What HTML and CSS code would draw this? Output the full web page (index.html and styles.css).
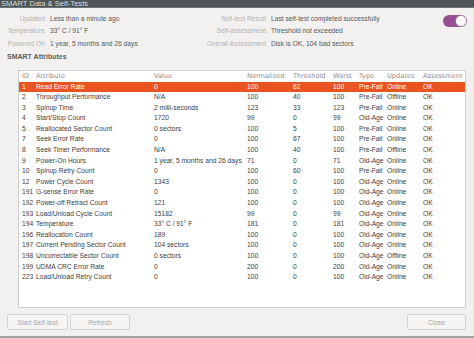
FILE: index.html
```html
<!DOCTYPE html>
<html lang="en">
<head>
    <meta charset="UTF-8">
    <title>SMART Data &amp; Self-Tests</title>
    <link rel="stylesheet" href="styles.css">
</head>
<body>
    <div class="titlebar"><span>SMART Data &amp; Self-Tests</span></div>

    <div class="summary">
        <span class="label">Updated</span>
        <span class="val">Less than a minute ago</span>
        <span class="label">Self-test Result</span>
        <span class="val">Last self-test completed successfully</span>
        <div class="switch"><span class="knob"></span></div>

        <span class="label">Temperature</span>
        <span class="val">33° C / 91° F</span>
        <span class="label">Self-assessment</span>
        <span class="val">Threshold not exceeded</span>
        <span></span>

        <span class="label">Powered On</span>
        <span class="val">1 year, 5 months and 26 days</span>
        <span class="label">Overall Assessment</span>
        <span class="val">Disk is OK, 104 bad sectors</span>
        <span></span>
    </div>

    <h2 class="section">SMART Attributes</h2>

    <div class="attrs">
        <table>
            <colgroup>
                <col class="c-id"><col class="c-name"><col class="c-value"><col class="c-norm">
                <col class="c-thr"><col class="c-worst"><col class="c-type"><col class="c-upd"><col class="c-ass">
            </colgroup>
            <thead>
                <tr>
                    <th>ID</th><th>Attribute</th><th>Value</th><th>Normalized</th><th>Threshold</th>
                    <th>Worst</th><th>Type</th><th>Updates</th><th>Assessment</th>
                </tr>
            </thead>
            <tbody>
                <tr class="selected"><td>1</td><td>Read Error Rate</td><td>0</td><td>100</td><td>62</td><td>100</td><td>Pre-Fail</td><td>Online</td><td>OK</td></tr>
                <tr><td>2</td><td>Throughput Performance</td><td>N/A</td><td>100</td><td>40</td><td>100</td><td>Pre-Fail</td><td>Offline</td><td>OK</td></tr>
                <tr><td>3</td><td>Spinup Time</td><td>2 milli-seconds</td><td>123</td><td>33</td><td>123</td><td>Pre-Fail</td><td>Online</td><td>OK</td></tr>
                <tr><td>4</td><td>Start/Stop Count</td><td>1720</td><td>99</td><td>0</td><td>99</td><td>Old-Age</td><td>Online</td><td>OK</td></tr>
                <tr><td>5</td><td>Reallocated Sector Count</td><td>0 sectors</td><td>100</td><td>5</td><td>100</td><td>Pre-Fail</td><td>Online</td><td>OK</td></tr>
                <tr><td>7</td><td>Seek Error Rate</td><td>0</td><td>100</td><td>67</td><td>100</td><td>Pre-Fail</td><td>Online</td><td>OK</td></tr>
                <tr><td>8</td><td>Seek Timer Performance</td><td>N/A</td><td>100</td><td>40</td><td>100</td><td>Pre-Fail</td><td>Offline</td><td>OK</td></tr>
                <tr><td>9</td><td>Power-On Hours</td><td>1 year, 5 months and 26 days</td><td>71</td><td>0</td><td>71</td><td>Old-Age</td><td>Online</td><td>OK</td></tr>
                <tr><td>10</td><td>Spinup Retry Count</td><td>0</td><td>100</td><td>60</td><td>100</td><td>Pre-Fail</td><td>Online</td><td>OK</td></tr>
                <tr><td>12</td><td>Power Cycle Count</td><td>1343</td><td>100</td><td>0</td><td>100</td><td>Old-Age</td><td>Online</td><td>OK</td></tr>
                <tr><td>191</td><td>G-sense Error Rate</td><td>0</td><td>100</td><td>0</td><td>100</td><td>Old-Age</td><td>Online</td><td>OK</td></tr>
                <tr><td>192</td><td>Power-off Retract Count</td><td>121</td><td>100</td><td>0</td><td>100</td><td>Old-Age</td><td>Online</td><td>OK</td></tr>
                <tr><td>193</td><td>Load/Unload Cycle Count</td><td>15182</td><td>99</td><td>0</td><td>99</td><td>Old-Age</td><td>Online</td><td>OK</td></tr>
                <tr><td>194</td><td>Temperature</td><td>33° C / 91° F</td><td>181</td><td>0</td><td>181</td><td>Old-Age</td><td>Online</td><td>OK</td></tr>
                <tr><td>196</td><td>Reallocation Count</td><td>189</td><td>100</td><td>0</td><td>100</td><td>Old-Age</td><td>Online</td><td>OK</td></tr>
                <tr><td>197</td><td>Current Pending Sector Count</td><td>104 sectors</td><td>100</td><td>0</td><td>100</td><td>Old-Age</td><td>Online</td><td>OK</td></tr>
                <tr><td>198</td><td>Uncorrectable Sector Count</td><td>0 sectors</td><td>100</td><td>0</td><td>100</td><td>Old-Age</td><td>Offline</td><td>OK</td></tr>
                <tr><td>199</td><td>UDMA CRC Error Rate</td><td>0</td><td>200</td><td>0</td><td>200</td><td>Old-Age</td><td>Online</td><td>OK</td></tr>
                <tr><td>223</td><td>Load/Unload Retry Count</td><td>0</td><td>100</td><td>0</td><td>100</td><td>Old-Age</td><td>Online</td><td>OK</td></tr>
            </tbody>
        </table>
    </div>

    <div class="actions">
        <button class="btn btn-start">Start Self-test</button>
        <button class="btn btn-refresh">Refresh</button>
        <span class="spacer"></span>
        <button class="btn btn-close">Close</button>
    </div>

    <div class="bottom-edge"></div>
</body>
</html>
```

FILE: styles.css
```css
body {
    margin: 0;
    height: 338px;
    overflow: hidden;
    background: #f2f1f0;
    font-family: "Liberation Sans", Arial, sans-serif;
    font-size: 6.7px;
    color: #404040;
}

.titlebar {
    height: 7px;
    background: #4f5456;
    border-bottom: 1px solid #6d7274;
    overflow: hidden;
}

.titlebar span {
    display: block;
    padding-left: 1px;
    font-size: 7.6px;
    line-height: 7px;
    color: #dedede;
    white-space: nowrap;
}

.summary {
    display: grid;
    grid-template-columns: 45px 145px 66px 1fr 24px;
    grid-auto-rows: 12.5px;
    column-gap: 5px;
    align-items: center;
    padding: 4px 7px 0 0;
    white-space: nowrap;
}

.summary .label {
    text-align: right;
    color: #b2b2b2;
}

.summary .val {
    color: #585858;
}

.switch {
    align-self: start;
    margin-top: 3px;
    height: 12px;
    border-radius: 6px;
    background: #974f93;
    display: flex;
    justify-content: flex-end;
    align-items: center;
    padding: 0 1px;
}

.knob {
    width: 10px;
    height: 10px;
    border-radius: 50%;
    background: #fafafa;
    box-shadow: 0 0 0 0.5px #b8b8b8;
}

.section {
    margin: 2px 0 0 7px;
    font-size: 7px;
    line-height: 10px;
    font-weight: bold;
    color: #5e5e5e;
}

.attrs {
    box-sizing: border-box;
    height: 238px;
    margin: 8.5px 8px 0 18px;
    border: 1px solid #cfcfcf;
    background: #fff;
}

table {
    width: 100%;
    table-layout: fixed;
    border-collapse: collapse;
}

.c-id { width: 17px; }
.c-name { width: 118px; }
.c-value { width: 93px; }
.c-norm { width: 46px; }
.c-thr { width: 40px; }
.c-worst { width: 26px; }
.c-type { width: 28px; }
.c-upd { width: 36px; }
.c-ass { width: 42px; }

th, td {
    padding: 0;
    text-align: left;
    white-space: nowrap;
}

th:first-child, td:first-child {
    padding-left: 3px;
}

th {
    height: 10.5px;
    font-family: "DejaVu Sans", sans-serif;
    font-size: 6.6px;
    font-weight: normal;
    color: #8c8c8c;
}

td {
    height: 10.6px;
    line-height: 10.6px;
}

tr.selected td {
    background: #e95420;
    color: #fff;
}

.actions {
    display: flex;
    gap: 2px;
    padding: 6px 8px 0 7px;
}

.spacer {
    flex: 1;
}

.btn {
    box-sizing: border-box;
    height: 16px;
    padding: 0;
    border: 1px solid #d3d3d3;
    border-radius: 2px;
    background: #f6f5f4;
    font-family: "Liberation Sans", Arial, sans-serif;
    font-size: 6.7px;
    color: #a8a8a8;
}

.btn-start { width: 61px; }
.btn-refresh { width: 60px; }
.btn-close { width: 59px; }

.bottom-edge {
    height: 3px;
    margin-top: 5.7px;
    background: #a3a3a3;
}
```
